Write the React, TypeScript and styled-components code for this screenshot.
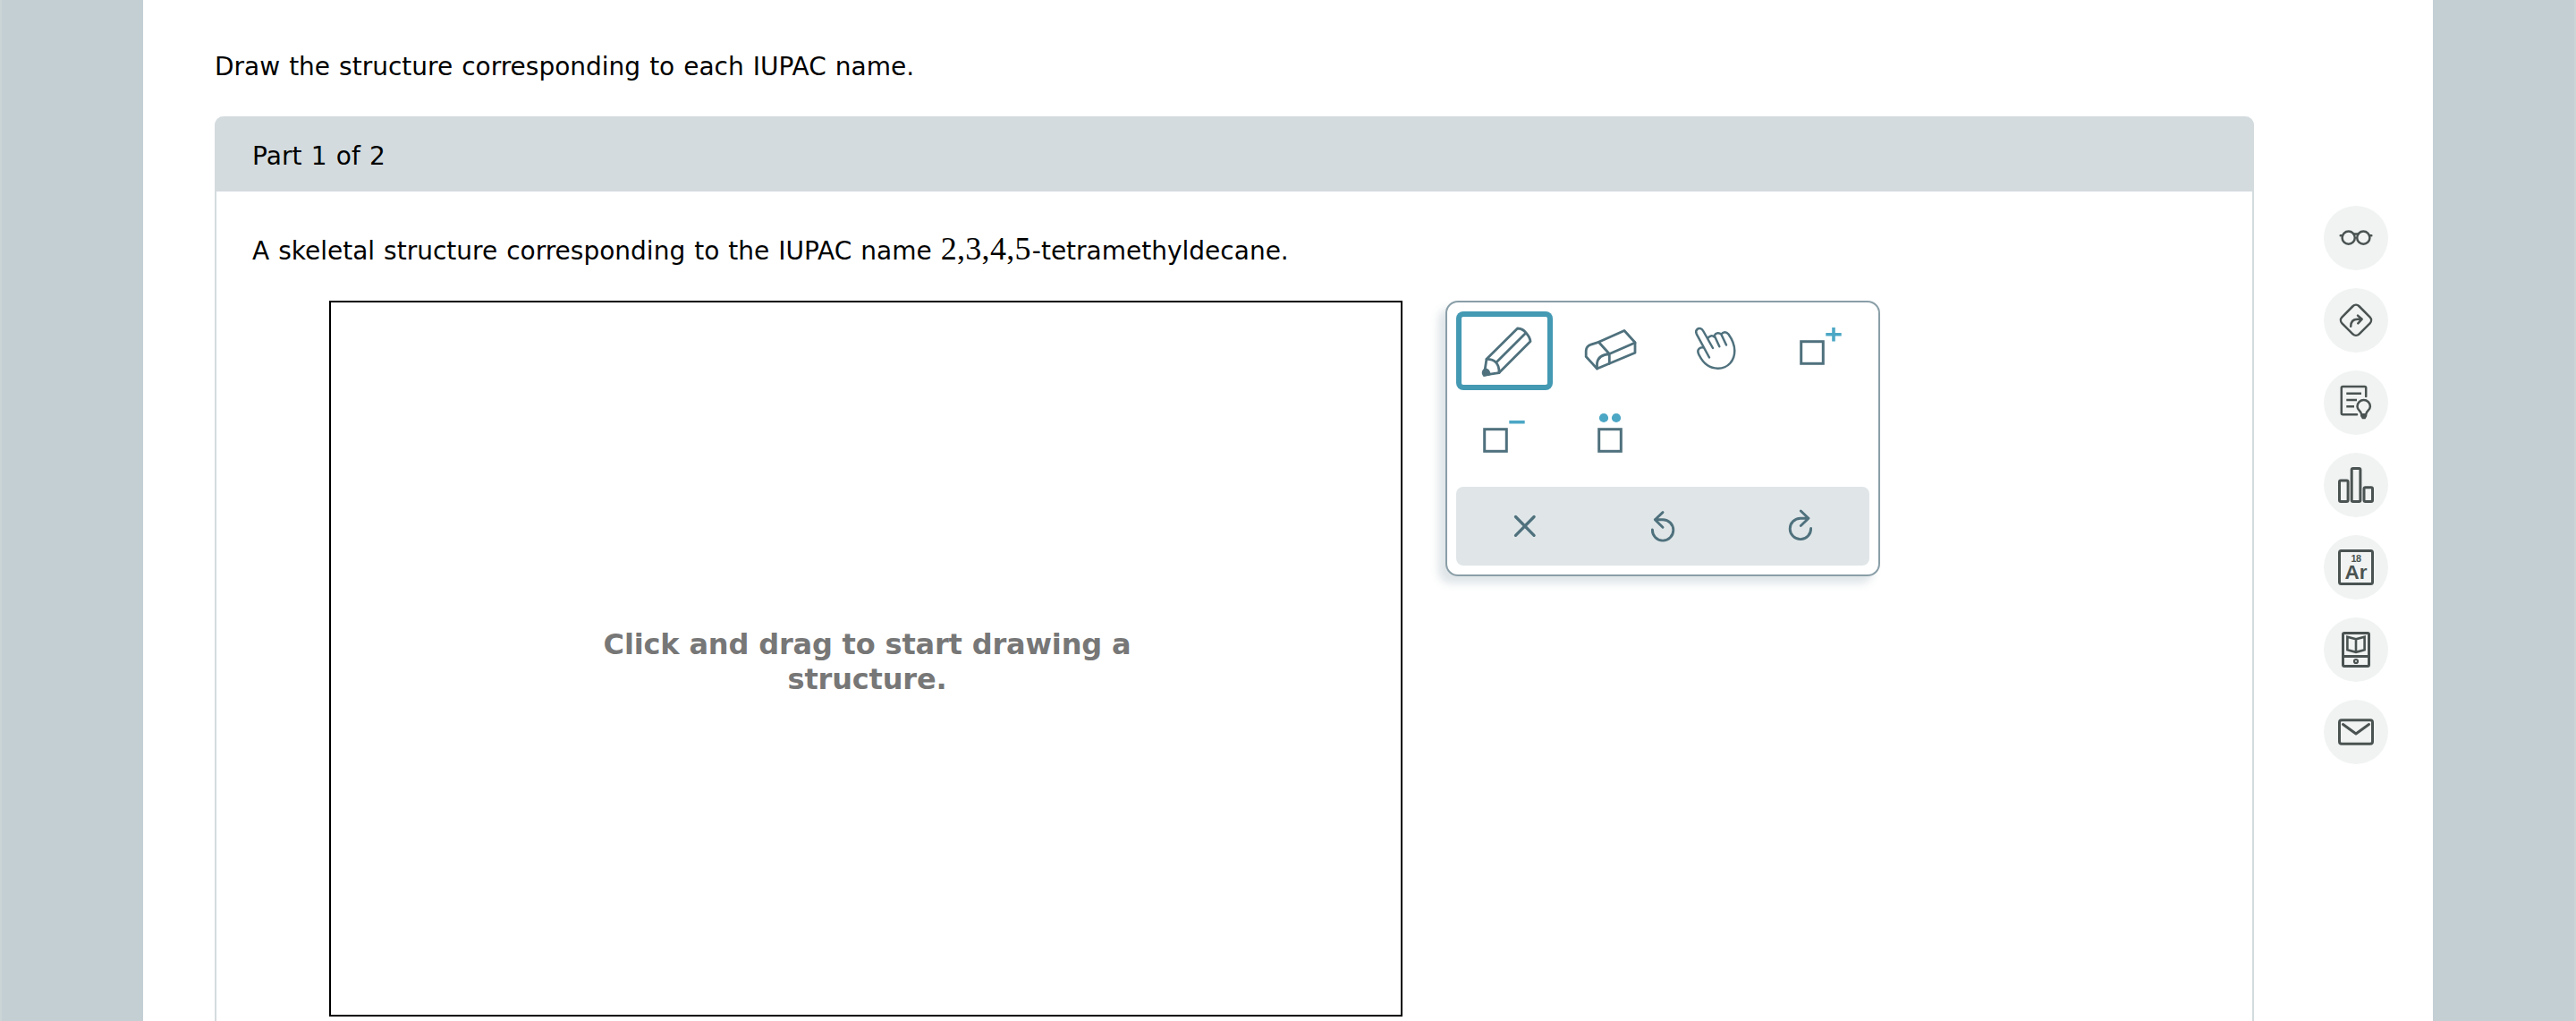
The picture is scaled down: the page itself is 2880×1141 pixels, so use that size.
import React from "react";
import styled, { createGlobalStyle, css } from "styled-components";

const teal = "#4f717d";
const aqua = "#4ca7c5";
const ink = "#4a5351";

const GlobalStyle = createGlobalStyle`
  *, *::before, *::after { box-sizing: border-box; }
  body { margin: 0; background: #c4cfd4; overflow: hidden; }
`;

const Page = styled.div`
  display: flex;
  justify-content: center;
  height: 1141px;
  overflow: hidden;
  background: #c4cfd4;
  border-left: 2px solid #cbd5d6;
  border-right: 2px solid #cbd5d6;
  font-family: Verdana, "DejaVu Sans", sans-serif;
  font-size: 28px;
  word-spacing: 1.1px;
  color: #000;
`;

const Sheet = styled.main`
  display: flex;
  width: 2560px;
  padding-left: 80px;
  background: #fff;
`;

const Question = styled.section`
  display: flex;
  flex-direction: column;
  width: 2280px;
`;

const Instruction = styled.h1`
  margin: 0;
  padding-top: 55px;
  height: 130px;
  font-size: 28px;
  font-weight: 400;
  line-height: 40px;
  white-space: nowrap;
`;

const Card = styled.div`
  flex: 1;
  border: 2px solid #d3dbde;
  border-top: 0;
  border-bottom: 0;
  border-radius: 10px 10px 0 0;
`;

const CardHeader = styled.header`
  display: flex;
  align-items: center;
  height: 84px;
  margin: 0 -2px;
  padding: 4px 42px 0;
  border-radius: 10px 10px 0 0;
  background: #d3dbde;
  letter-spacing: 0.1px;
`;

const Prompt = styled.p`
  margin: 0;
  padding: 46px 0 0 40px;
  height: 122px;
  line-height: 40px;
  white-space: nowrap;
`;

const Locants = styled.span`
  font-family: "Times New Roman", "Liberation Serif", serif;
  font-size: 36px;
  line-height: 1;
  letter-spacing: 0.3px;
  margin-right: 1px;
`;

const Workspace = styled.div`
  display: flex;
  align-items: flex-start;
  gap: 48px;
  padding-left: 126px;
`;

const Canvas = styled.div`
  display: flex;
  align-items: center;
  justify-content: center;
  width: 1200px;
  height: 800px;
  border: 2px solid #000;
`;

const Hint = styled.p`
  margin: 0;
  padding: 7px 0 0 3px;
  width: 640px;
  text-align: center;
  font-size: 32px;
  font-weight: 700;
  line-height: 39px;
  letter-spacing: -0.17px;
  word-spacing: 0;
  color: #777;
`;

const Toolbox = styled.div`
  display: flex;
  flex-direction: column;
  gap: 10px;
  width: 486px;
  height: 308px;
  padding: 10px;
  border: 2px solid #8a9fa8;
  border-radius: 14px;
  background: #fff;
  box-shadow: -8px 8px 10px rgba(79, 113, 125, 0.18);
`;

const ToolGrid = styled.div`
  display: grid;
  grid-template-columns: repeat(4, 108px);
  grid-auto-rows: 88px;
  gap: 10px;
`;

const bareButton = css`
  display: flex;
  padding: 0;
  border: 0;
  background: none;
`;

const ToolButton = styled.button<{ $active?: boolean }>`
  ${bareButton}
  border-radius: 8px;
  box-shadow: ${(p) => (p.$active ? "inset 0 0 0 6px #4499b3" : "none")};
`;

const ActionBar = styled.div`
  display: grid;
  grid-template-columns: repeat(3, 154px);
  height: 88px;
  border-radius: 8px;
  background: #e0e6e8;
`;

const ActionButton = styled.button`
  ${bareButton}
`;

const Rail = styled.nav`
  display: flex;
  flex-direction: column;
  gap: 20px;
  padding: 230px 0 0 78px;
`;

const RailButton = styled.button`
  ${bareButton}
  width: 72px;
  height: 72px;
  border-radius: 50%;
  background: #f1f3f3;
`;

const Drawing = styled.svg`
  display: block;
  fill: none;
  stroke-linecap: round;
  stroke-linejoin: round;
`;

const Tool = ({ children }: { children: React.ReactNode }) => (
  <Drawing width="108" height="88" viewBox="0 0 108 88" stroke={teal} strokeWidth="2.8">
    {children}
  </Drawing>
);

const Action = ({ children }: { children: React.ReactNode }) => (
  <Drawing width="154" height="88" viewBox="0 0 154 88" stroke={teal} strokeWidth="2.9">
    {children}
  </Drawing>
);

const RailIcon = ({ width = 3, children }: { width?: number; children: React.ReactNode }) => (
  <Drawing width="72" height="72" viewBox="0 0 72 72" stroke={ink} strokeWidth={width}>
    {children}
  </Drawing>
);

const Atom = ({ x }: { x: number }) => (
  <rect x={x + 1.7} y="33.7" width="24.6" height="24.6" strokeWidth="3" strokeLinejoin="miter" />
);

const tools = [
  {
    name: "Draw",
    art: (
      <>
        <path d="M34 53.3 68.6 19C73 19.200 76 21 78 24c2.8 2.8 4.6 5.8 5 9.6L48 68.6 31.2 71.2Z" />
        <path d="M78 24 45.6 56.2M34 53.3c8.8-.3 14.5 5 14 15.3" />
        <path d="M32.2 64.7c3 .2 5 2.6 4.6 5.7l-5.6.9c-1.6-2.2-1.2-4.6 1-6.6Z" fill={teal} />
      </>
    ),
  },
  {
    name: "Erase",
    art: (
      <>
        <path d="M41.3 34.3 70 21.5 82 34.7V46.3L39.5 64 27.2 50.5V44c.3-3.4 2.2-5.8 5.3-6.8Z" />
        <path d="M41.3 34.3 53.3 47.5 82 35M53.3 47.5V58.3M39.5 64V58c.8-6 5-9.8 13.8-10.5" />
      </>
    ),
  },
  {
    name: "Move",
    art: (
      <path
        strokeWidth="2.5"
        d="M51 41 40.3 22c-1.6-2.9-4.5-3.9-6.6-2.3-1.7 1.4-1.9 3.400-.9 5.6L47 51.5M40.5 40.5c-4-.8-6.9 2-6 5.4.3 1.2.7 2.3 1.4 3.4C40.5 58.5 47 63.7 56.7 63.7 68 63.7 75.3 55 75.3 44c0-6.8-2.6-12.6-6.8-18.5-2.5-3.1-5.5-3.2-8.2 0L66 37.500M60.3 25.7c-2-2.2-6-2.2-7.6 1.3L58.3 39.3M52.7 28.7c-2-2.2-6-1.7-7.4 1.6"
      />
    ),
  },
  {
    name: "Positive charge",
    art: (
      <>
        <Atom x={30} />
        <path d="M68 18V33.5M59.3 25.7H76.7" stroke={aqua} strokeWidth="3.6" strokeLinecap="butt" />
      </>
    ),
  },
  {
    name: "Negative charge",
    art: (
      <>
        <Atom x={30} />
        <path d="M59.3 25.7H76.7" stroke={aqua} strokeWidth="3.6" strokeLinecap="butt" />
      </>
    ),
  },
  {
    name: "Lone pair",
    art: (
      <>
        <Atom x={40} />
        <g fill={aqua} stroke="none">
          <circle cx="47" cy="21" r="5.1" />
          <circle cx="61" cy="21" r="5.1" />
        </g>
      </>
    ),
  },
];

const actions = [
  { name: "Clear", art: <path d="M66.5 33.5 87.1 54.3M87.1 33.5 66.5 54.3" strokeWidth="3.3" /> },
  { name: "Undo", art: <path d="M65.4 48A11.7 11.7 0 1 0 77 36.7H68.3M77 28.6 68.3 36.7 77 45.3" /> },
  { name: "Redo", art: <path d="M88.6 46.5A11.7 11.7 0 1 1 77 35.2H86M77.3 27 86 35.200 77.3 43.5" /> },
];

const links = [
  {
    name: "Reading view",
    art: (
      <RailIcon width={2.5}>
        <circle cx="27.7" cy="35.7" r="7.1" />
        <circle cx="44.3" cy="35.7" r="7.1" />
        <path d="M18.7 33.3H21M51 33.3H53.3M33.5 31.5H38.500" />
      </RailIcon>
    ),
  },
  {
    name: "Directions",
    art: (
      <RailIcon width={2.5}>
        <rect x="22.5" y="22.3" width="27" height="27" rx="5" transform="rotate(45 36 35.8)" />
        <path d="M30.2 42.8C30.3 37 32.5 34.7 37.5 34.7H42.5M38 30.6 42.7 34.7 38.3 39.3" />
      </RailIcon>
    ),
  },
  {
    name: "Hints",
    art: (
      <RailIcon width={2.5}>
        <path d="M47.2 29V19.5Q47.2 18 45.7 18H21.3Q19.8 18 19.8 19.5V47.7Q19.8 49.2 21.3 49.2H37" />
        <path d="M25.3 25.8H42M25.3 33H37M25.3 40.2H34" strokeLinecap="butt" />
        <path d="M42 48.5C41.8 45.5 37.5 44.5 37.5 40.2A7.2 7.2 0 0 1 51.9 40.2C51.9 44.5 47.5 45.5 47.3 48.5" />
        <path d="M41 48H48.3V51L46.5 54.3H43L41 51Z" fill={ink} stroke="none" />
      </RailIcon>
    ),
  },
  {
    name: "Progress",
    art: (
      <RailIcon>
        <rect x="17.5" y="31" width="9.6" height="23.5" rx="1.5" />
        <rect x="31.2" y="17.5" width="9.7" height="37" rx="1.5" />
        <rect x="45" y="38.7" width="9.5" height="15.8" rx="1.5" />
      </RailIcon>
    ),
  },
  {
    name: "Periodic table",
    art: (
      <RailIcon>
        <rect x="17.5" y="17.5" width="37" height="37" rx="2" />
        <g fill={ink} stroke="none" textAnchor="middle" fontFamily="'Liberation Sans', Arial, sans-serif" fontWeight="700">
          <text x="36" y="30.3" fontSize="10.8" letterSpacing="-0.4">18</text>
          <text x="36" y="49.3" fontSize="22.5">Ar</text>
        </g>
      </RailIcon>
    ),
  },
  {
    name: "Textbook",
    art: (
      <RailIcon>
        <rect x="21.5" y="17.5" width="29" height="37" rx="1.5" />
        <path d="M21.5 43.6H50.5" />
        <path d="M36 24.3 26.4 21.7V36.3L36 38.8 45.6 36.3V21.7L36 24.3V38.8" strokeWidth="2.6" strokeLinejoin="miter" />
        <circle cx="36" cy="49" r="2" strokeWidth="2.2" />
      </RailIcon>
    ),
  },
  {
    name: "Message",
    art: (
      <RailIcon>
        <rect x="17.5" y="22.8" width="37" height="26.4" rx="2.5" />
        <path d="M21.5 27.5 36 38 50.5 27.5" />
      </RailIcon>
    ),
  },
];

export default function App() {
  return (
    <>
      <GlobalStyle />
      <Page>
        <Sheet>
          <Question>
            <Instruction>Draw the structure corresponding to each IUPAC name.</Instruction>
            <Card>
              <CardHeader>Part 1 of 2</CardHeader>
              <Prompt>
                A skeletal structure corresponding to the IUPAC name <Locants>2,3,4,5</Locants>-tetramethyldecane.
              </Prompt>
              <Workspace>
                <Canvas>
                  <Hint>Click and drag to start drawing a structure.</Hint>
                </Canvas>
                <Toolbox>
                  <ToolGrid>
                    {tools.map((t, i) => (
                      <ToolButton key={t.name} $active={i === 0} aria-label={t.name}>
                        <Tool>{t.art}</Tool>
                      </ToolButton>
                    ))}
                  </ToolGrid>
                  <ActionBar>
                    {actions.map((a) => (
                      <ActionButton key={a.name} aria-label={a.name}>
                        <Action>{a.art}</Action>
                      </ActionButton>
                    ))}
                  </ActionBar>
                </Toolbox>
              </Workspace>
            </Card>
          </Question>
          <Rail>
            {links.map((l) => (
              <RailButton key={l.name} aria-label={l.name}>
                {l.art}
              </RailButton>
            ))}
          </Rail>
        </Sheet>
      </Page>
    </>
  );
}
